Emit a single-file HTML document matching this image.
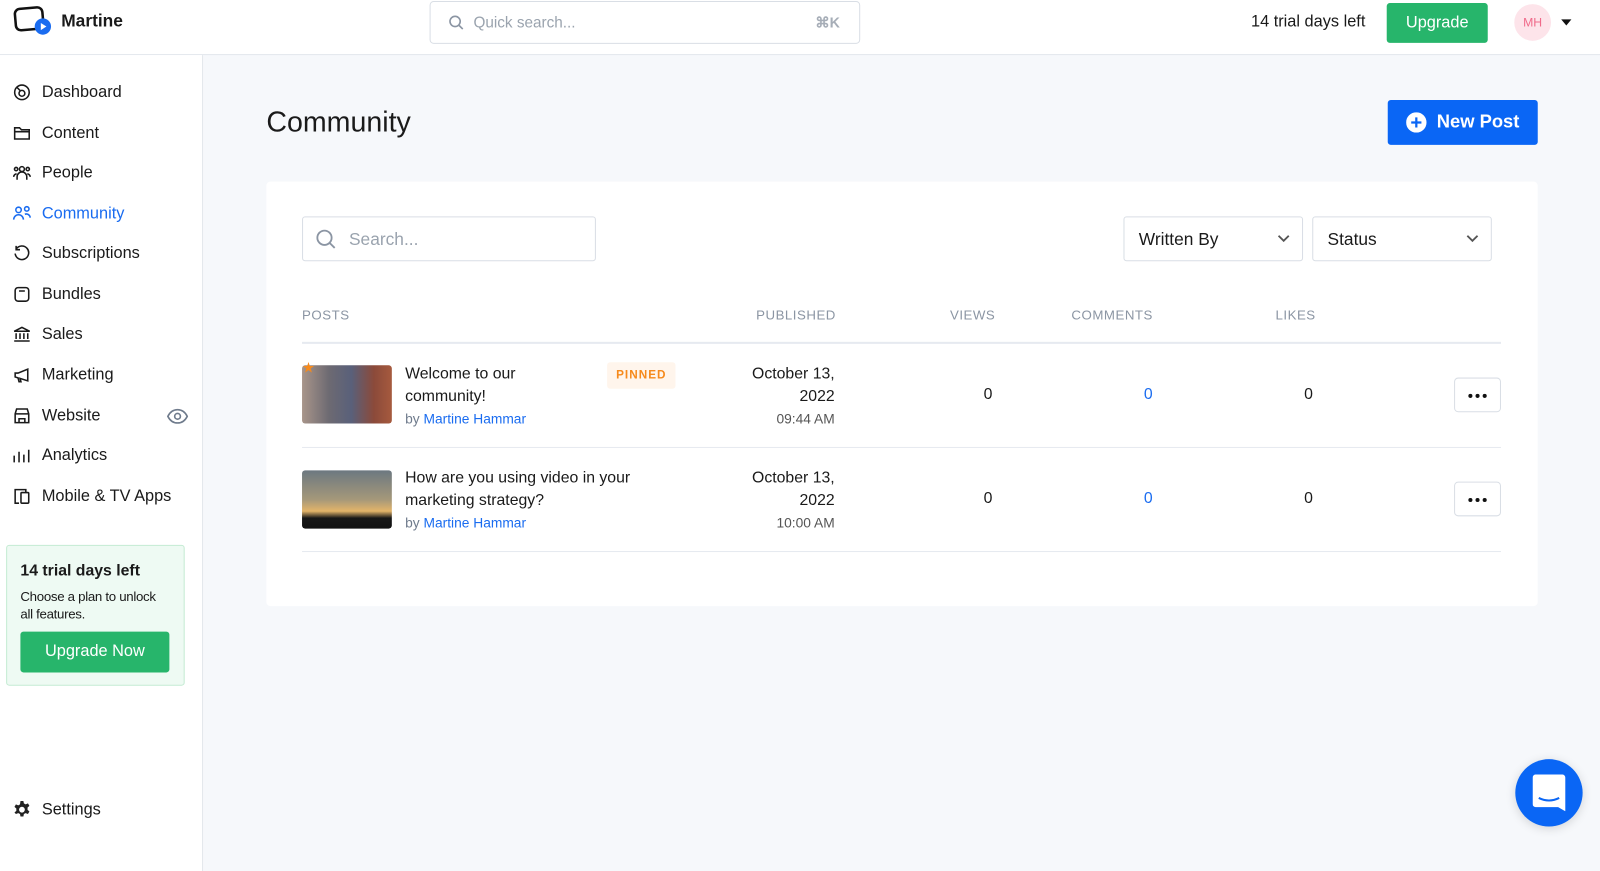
<!DOCTYPE html>
<html><head><meta charset="utf-8"><style>
*{box-sizing:border-box;margin:0;padding:0}
html,body{width:1600px;height:842px;overflow:hidden;background:#f6f8fb}
#w{position:absolute;left:0;top:0;width:1568px;height:826px;transform:scale(1.0204);transform-origin:0 0;font-family:"Liberation Sans",sans-serif;color:#1a1a1a}
.top{position:absolute;left:0;top:0;width:1600px;height:54px;background:#fff;border-bottom:1px solid #e3e7ec}
.side{position:absolute;left:0;top:54px;width:199px;height:800px;background:#fff;border-right:1px solid #e3e7ec}
.nav{position:absolute;left:12px;font-size:16px;display:flex;align-items:center;gap:10px;color:#1a1a1a}
.nav svg{width:19px;height:19px;fill:none;stroke:#1a1a1a;stroke-width:1.6}
.abs{position:absolute}
.th{position:absolute;top:301px;font-size:13px;color:#8b95a3;letter-spacing:.5px}
.cell{position:absolute;font-size:15.5px}
.dots{position:absolute;left:1425px;width:46px;height:34px;border:1px solid #d9dee5;border-radius:4px;background:#fff}
.dots i{position:absolute;top:15px;width:4px;height:4px;border-radius:50%;background:#111}
</style></head><body><div id="w">
<div class="top">
 <svg class="abs" style="left:13px;top:5px" width="40" height="30" viewBox="0 0 40 30"><rect x="2" y="3" width="27" height="21" rx="5" fill="none" stroke="#111" stroke-width="2.5" transform="rotate(-5 15 13)"/><circle cx="29" cy="21" r="8" fill="#1a6cf0"/><path d="M27 17.5v7l5.5-3.5z" fill="#fff"/></svg>
 <div class="abs" style="left:60px;top:11px;font-size:17px;font-weight:bold">Martine</div>
 <div class="abs" style="left:421px;top:1px;width:422px;height:42px;border:1px solid #d9dee5;border-radius:4px">
  <svg class="abs" style="left:17px;top:12px" width="16" height="16" viewBox="0 0 16 16" fill="none" stroke="#8b95a3" stroke-width="1.6"><circle cx="7" cy="7" r="5"/><path d="M11 11l3.5 3.5"/></svg>
  <div class="abs" style="left:42px;top:12px;font-size:15px;color:#9aa3ae">Quick search...</div>
  <div class="abs" style="left:377px;top:12px;font-size:14px;color:#a6adb7;font-weight:bold">⌘K</div>
 </div>
 <div class="abs" style="left:1226px;top:13px;font-size:16px">14 trial days left</div>
 <div class="abs" style="left:1359px;top:3px;width:99px;height:39px;background:#27b56b;border-radius:3px;color:#fff;font-size:16px;text-align:center;line-height:39px">Upgrade</div>
 <div class="abs" style="left:1484px;top:4px;width:36px;height:36px;border-radius:50%;background:#fde4ea;color:#f06a8a;font-size:12px;text-align:center;line-height:36px">MH</div>
 <div class="abs" style="left:1530px;top:19px;border-left:5px solid transparent;border-right:5px solid transparent;border-top:6px solid #111"></div>
</div>
<div class="side">
 <div class="nav" style="top:27px"><svg viewBox="0 0 20 20"><circle cx="10" cy="10" r="7.5"/><circle cx="10" cy="11" r="3"/><path d="M5 5l3 3"/></svg>Dashboard</div>
 <div class="nav" style="top:67px"><svg viewBox="0 0 20 20"><path d="M2.5 4.5h5l2 2h8v9.5h-15z M2.5 8.5h15"/></svg>Content</div>
 <div class="nav" style="top:106px"><svg viewBox="0 0 20 20"><circle cx="10" cy="6" r="2.5"/><path d="M5 17v-3a5 5 0 0110 0v3"/><circle cx="4" cy="6" r="1.7"/><circle cx="16" cy="6" r="1.7"/><path d="M1.5 14a3 3 0 013-3M18.5 14a3 3 0 00-3-3"/></svg>People</div>
 <div class="nav" style="top:146px;color:#1a6cf0"><svg viewBox="0 0 20 20" style="stroke:#1a6cf0"><circle cx="6.5" cy="6" r="2.8"/><circle cx="15" cy="5" r="2.3"/><path d="M1.5 16a5 5 0 0110 0M13 10.5a4 4 0 015.5 3.5"/></svg>Community</div>
 <div class="nav" style="top:185px"><svg viewBox="0 0 20 20"><path d="M4 5.5A7 7 0 113 10M4 2v4h4"/></svg>Subscriptions</div>
 <div class="nav" style="top:225px"><svg viewBox="0 0 20 20"><rect x="3" y="3" width="14" height="14" rx="3"/><path d="M7 6.5h6"/></svg>Bundles</div>
 <div class="nav" style="top:264px"><svg viewBox="0 0 20 20"><path d="M2 7l8-4 8 4zM4 9v6M8 9v6M12 9v6M16 9v6M2 17h16"/></svg>Sales</div>
 <div class="nav" style="top:304px"><svg viewBox="0 0 20 20"><path d="M3 8v4l3 1 1 4h2l-1-3.5L16 16V4L6 8z"/></svg>Marketing</div>
 <div class="nav" style="top:344px"><svg viewBox="0 0 20 20"><path d="M3 8l1.5-5h11L17 8v9H3z M3 8h14 M7 17v-4h6v4"/></svg>Website</div>
 <svg class="abs" style="left:163px;top:345px" width="22" height="18" viewBox="0 0 22 18" fill="none" stroke="#6f7b8c" stroke-width="1.6"><path d="M1.5 9C4 4 7.5 2.5 11 2.5S18 4 20.5 9C18 14 14.5 15.5 11 15.5S4 14 1.5 9z"/><circle cx="11" cy="9" r="2.8"/></svg>
 <div class="nav" style="top:383px"><svg viewBox="0 0 20 20"><path d="M2 10v7M7 6v11M12 9v8M17 4v13"/></svg>Analytics</div>
 <div class="nav" style="top:423px"><svg viewBox="0 0 20 20"><path d="M7 17H3V3h11v3"/><rect x="9" y="6" width="8" height="11" rx="1"/></svg>Mobile &amp; TV Apps</div>
 <div class="abs" style="left:6px;top:480px;width:175px;height:138px;background:#eefaf3;border:1px solid #c4ebd3;border-radius:3px">
  <div class="abs" style="left:13px;top:16px;font-size:15.5px;font-weight:bold">14 trial days left</div>
  <div class="abs" style="left:13px;top:41px;font-size:13px;line-height:17px;letter-spacing:-.3px">Choose a plan to unlock<br>all features.</div>
  <div class="abs" style="left:13px;top:84px;width:146px;height:40px;background:#27b56b;border-radius:3px;color:#fff;font-size:16px;text-align:center;line-height:40px">Upgrade Now</div>
 </div>
 <div class="nav" style="top:730px"><svg viewBox="0 0 20 20" style="fill:#222;stroke:none"><path d="M8.5 1h3l.5 2.5 1.8 1 2.4-1 1.5 2.6-1.9 1.7v2.4l1.9 1.7-1.5 2.6-2.4-1-1.8 1-.5 2.5h-3l-.5-2.5-1.8-1-2.4 1L2.3 12.9l1.9-1.7V8.8L2.3 7.1l1.5-2.6 2.4 1 1.8-1zM10 7a3 3 0 100 6 3 3 0 000-6z"/></svg>Settings</div>
</div>
<div class="abs" style="left:261px;top:104px;font-size:28px">Community</div>
<div class="abs" style="left:1360px;top:98px;width:147px;height:44px;background:#0a66f5;border-radius:3px;color:#fff;font-size:18px;font-weight:bold">
 <svg class="abs" style="left:18px;top:12px" width="20" height="20" viewBox="0 0 20 20"><circle cx="10" cy="10" r="10" fill="#fff"/><path d="M10 5v10M5 10h10" stroke="#0a66f5" stroke-width="2.2"/></svg>
 <div class="abs" style="left:48px;top:11px">New Post</div>
</div>
<div class="abs" style="left:261px;top:178px;width:1246px;height:416px;background:#fff;border-radius:4px"></div>
<div class="abs" style="left:296px;top:212px;width:288px;height:44px;border:1px solid #d9dee5;border-radius:3px;background:#fff">
 <svg class="abs" style="left:12px;top:11px" width="21" height="21" viewBox="0 0 21 21" fill="none" stroke="#8b95a3" stroke-width="1.8"><circle cx="9" cy="9" r="7"/><path d="M14 14l5 5"/></svg>
 <div class="abs" style="left:45px;top:12px;font-size:17px;color:#9aa3ae">Search...</div>
</div>
<div class="abs" style="left:1101px;top:212px;width:176px;height:44px;border:1px solid #d9dee5;border-radius:3px;background:#fff;font-size:17px"><div class="abs" style="left:14px;top:12px">Written By</div><svg class="abs" style="left:150px;top:17px" width="12" height="8" viewBox="0 0 12 8" fill="none" stroke="#555" stroke-width="1.8"><path d="M1 1l5 5 5-5"/></svg></div>
<div class="abs" style="left:1286px;top:212px;width:176px;height:44px;border:1px solid #d9dee5;border-radius:3px;background:#fff;font-size:17px"><div class="abs" style="left:14px;top:12px">Status</div><svg class="abs" style="left:150px;top:17px" width="12" height="8" viewBox="0 0 12 8" fill="none" stroke="#555" stroke-width="1.8"><path d="M1 1l5 5 5-5"/></svg></div>
<div class="th" style="left:296px">POSTS</div>
<div class="th" style="left:741px">PUBLISHED</div>
<div class="th" style="left:931px">VIEWS</div>
<div class="th" style="left:1050px">COMMENTS</div>
<div class="th" style="left:1250px">LIKES</div>
<div class="abs" style="left:296px;top:335px;width:1175px;height:2px;background:#e6eaf0"></div>
<div class="abs" style="left:296px;top:438px;width:1175px;height:1px;background:#e6eaf0"></div>
<div class="abs" style="left:296px;top:540px;width:1175px;height:1px;background:#e6eaf0"></div>
<div class="abs" style="left:296px;top:358px;width:88px;height:57px;border-radius:3px;background:linear-gradient(90deg,#a8958a 0%,#6d6a72 30%,#59607a 55%,#8b4a3a 80%,#a65a3e 100%)"></div>
<div class="abs" style="left:296px;top:352px;color:#f68a1c;font-size:14px">★</div>
<div class="cell" style="left:397px;top:356px;line-height:22px">Welcome to our<br>community!</div>
<div class="cell" style="left:397px;top:403px;font-size:13.5px;color:#6f7b8c">by <span style="color:#1a6cf0">Martine Hammar</span></div>
<div class="abs" style="left:595px;top:355px;width:67px;height:26px;background:#fff5ec;border-radius:3px;color:#f68a1c;font-size:11.5px;font-weight:bold;letter-spacing:1px;text-align:center;line-height:26px">PINNED</div>
<div class="cell" style="left:690px;width:128px;top:356px;text-align:right;line-height:22px">October 13,<br>2022</div>
<div class="cell" style="left:690px;width:128px;top:403px;text-align:right;font-size:13.5px;color:#555">09:44 AM</div>
<div class="cell" style="left:964px;top:378px">0</div>
<div class="cell" style="left:1121px;top:378px;color:#1a6cf0">0</div>
<div class="cell" style="left:1278px;top:378px">0</div>
<div class="dots" style="top:370px"><i style="left:13px"></i><i style="left:20px"></i><i style="left:27px"></i></div>
<div class="abs" style="left:296px;top:461px;width:88px;height:57px;border-radius:3px;background:linear-gradient(180deg,#6c7880 0%,#a5987a 50%,#e3b469 70%,#171717 82%,#111 100%)"></div>
<div class="cell" style="left:397px;top:458px;line-height:22px">How are you using video in your<br>marketing strategy?</div>
<div class="cell" style="left:397px;top:505px;font-size:13.5px;color:#6f7b8c">by <span style="color:#1a6cf0">Martine Hammar</span></div>
<div class="cell" style="left:690px;width:128px;top:458px;text-align:right;line-height:22px">October 13,<br>2022</div>
<div class="cell" style="left:690px;width:128px;top:505px;text-align:right;font-size:13.5px;color:#555">10:00 AM</div>
<div class="cell" style="left:964px;top:480px">0</div>
<div class="cell" style="left:1121px;top:480px;color:#1a6cf0">0</div>
<div class="cell" style="left:1278px;top:480px">0</div>
<div class="dots" style="top:472px"><i style="left:13px"></i><i style="left:20px"></i><i style="left:27px"></i></div>
<div class="abs" style="left:1485px;top:744px;width:66px;height:66px;border-radius:50%;background:#0a66f5;box-shadow:0 2px 10px rgba(0,0,0,.15)">
 <svg class="abs" style="left:17px;top:15px" width="33" height="36" viewBox="0 0 33 36"><path d="M3 0h26a3 3 0 013 3v33l-7-4H3a3 3 0 01-3-3V3a3 3 0 013-3z" fill="#fff"/><path d="M6 23q10 5 20 0" stroke="#0a66f5" stroke-width="2" fill="none"/></svg>
</div>
</div></body></html>
